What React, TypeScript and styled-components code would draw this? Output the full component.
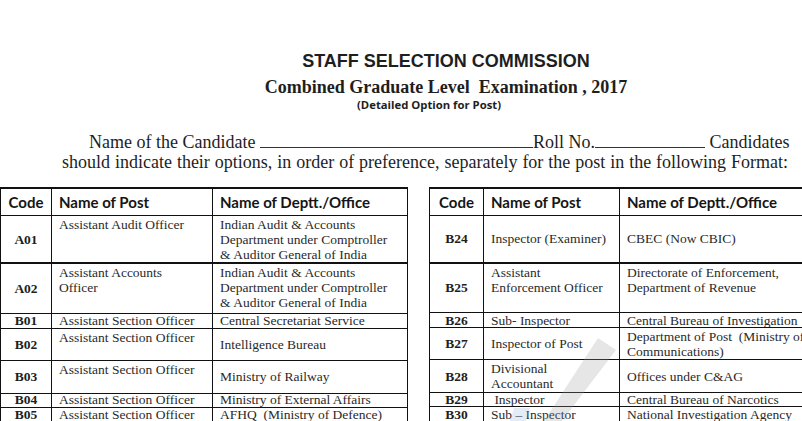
import styled, { createGlobalStyle } from 'styled-components'

type Align = 'top' | 'middle'

interface Row {
  code: string
  post: string[]
  dept: string[]
  height: number
  postAlign?: Align
  deptAlign?: Align
  thick?: boolean
}

const leftRows: Row[] = [
  { code: 'A01', post: ['Assistant Audit Officer'], dept: ['Indian Audit & Accounts', 'Department under Comptroller', '& Auditor General of India'], height: 47, postAlign: 'top', deptAlign: 'top', thick: true },
  { code: 'A02', post: ['Assistant Accounts', 'Officer'], dept: ['Indian Audit & Accounts', 'Department under Comptroller', '& Auditor General of India'], height: 50, postAlign: 'top', deptAlign: 'top' },
  { code: 'B01', post: ['Assistant Section Officer'], dept: ['Central Secretariat Service'], height: 15 },
  { code: 'B02', post: ['Assistant Section Officer'], dept: ['Intelligence Bureau'], height: 32, postAlign: 'top' },
  { code: 'B03', post: ['Assistant Section Officer'], dept: ['Ministry of Railway'], height: 33, postAlign: 'top' },
  { code: 'B04', post: ['Assistant Section Officer'], dept: ['Ministry of External Affairs'], height: 14 },
  { code: 'B05', post: ['Assistant Section Officer'], dept: ['AFHQ  (Ministry of Defence)'], height: 15 },
]

const rightRows: Row[] = [
  { code: 'B24', post: ['Inspector (Examiner)'], dept: ['CBEC (Now CBIC)'], height: 47, thick: true },
  { code: 'B25', post: ['Assistant', 'Enforcement Officer'], dept: ['Directorate of Enforcement,', 'Department of Revenue'], height: 50, postAlign: 'top', deptAlign: 'top' },
  { code: 'B26', post: ['Sub- Inspector'], dept: ['Central Bureau of Investigation'], height: 15 },
  { code: 'B27', post: ['Inspector of Post'], dept: ['Department of Post  (Ministry of', 'Communications)'], height: 32 },
  { code: 'B28', post: ['Divisional', 'Accountant'], dept: ['Offices under C&AG'], height: 33 },
  { code: 'B29', post: [' Inspector'], dept: ['Central Bureau of Narcotics'], height: 14 },
  { code: 'B30', post: ['Sub \u2013 Inspector'], dept: ['National Investigation Agency'], height: 15 },
]

const GlobalStyle = createGlobalStyle`
  html, body {
    margin: 0;
    padding: 0;
    background: #fff;
    overflow: hidden;
  }
`

const Page = styled.div`
  position: relative;
  width: 892px;
  height: 421px;
  overflow: hidden;
  color: #1e1e1e;
`

const Heading = styled.header`
  display: flex;
  flex-direction: column;
  align-items: center;
  padding-top: 51px;
`

const Title = styled.h1`
  margin: 0;
  font: bold 18px/20px "Liberation Sans", Arial, sans-serif;
`

const Subtitle = styled.h2`
  margin: 6px 0 0;
  font: bold 18px/20px "Liberation Serif", "Times New Roman", serif;
  white-space: pre;
`

const Note = styled.div`
  margin: 1px 34px 0 0;
  font: bold 11.3px/14px "Open Sans", sans-serif;
`

const Intro = styled.div`
  margin-top: 20px;
  font: 18px/20px "Liberation Serif", "Times New Roman", serif;
  white-space: pre;
`

const IntroLine = styled.div<{ $indent: number; $spread?: number }>`
  padding-left: ${p => p.$indent}px;
  word-spacing: ${p => p.$spread ?? 0}px;
`

const Blank = styled.span<{ $width: number }>`
  display: inline-block;
  width: ${p => p.$width}px;
  height: 0;
  border-bottom: 1px solid #333;
`

const Tables = styled.div`
  display: flex;
  align-items: flex-start;
  gap: 21px;
  margin-top: 15px;
`

const Table = styled.table<{ $width: number }>`
  width: ${p => p.$width}px;
  border-collapse: collapse;
  table-layout: fixed;
  border-top: 2px solid #111;
`

const HeadCell = styled.th<{ $center?: boolean }>`
  height: 26px;
  padding: 0 7px;
  border: 1px solid #111;
  text-align: ${p => (p.$center ? 'center' : 'left')};
  font: bold 15px/16px Lato, "Open Sans", sans-serif;
  color: #151515;
  white-space: nowrap;
`

const CodeCell = styled.td`
  padding: 0;
  border: 1px solid #111;
  text-align: center;
  vertical-align: middle;
  font: bold 13.5px/15px "Liberation Serif", "Times New Roman", serif;
`

const TextCell = styled.td<{ $align: Align }>`
  padding: ${p => (p.$align === 'top' ? '1px' : '0')} 7px 0;
  border: 1px solid #111;
  vertical-align: ${p => p.$align};
  font: 13.5px/15px "Liberation Serif", "Times New Roman", serif;
  color: #2a2a2a;
  white-space: pre;
  overflow: hidden;
`

const BodyRow = styled.tr<{ $height: number; $thick?: boolean }>`
  height: ${p => p.$height}px;
  border-bottom: ${p => (p.$thick ? '2px' : '1px')} solid #111;

  ${p => p.$height <= 15 && `
    td { line-height: ${p.$height - 2}px; }
  `}
`

const Watermark = styled.svg`
  position: absolute;
  left: 510px;
  top: 320px;
  pointer-events: none;
`

function OptionTable({ rows, widths }: { rows: Row[]; widths: number[] }) {
  const total = widths.reduce((a, b) => a + b, 0)
  return (
    <Table $width={total}>
      <colgroup>
        {widths.map((w, i) => <col key={i} style={{ width: w }} />)}
      </colgroup>
      <thead>
        <tr>
          <HeadCell $center>Code</HeadCell>
          <HeadCell>Name of Post</HeadCell>
          <HeadCell>Name of Deptt./Office</HeadCell>
        </tr>
      </thead>
      <tbody>
        {rows.map(r => (
          <BodyRow key={r.code} $height={r.height} $thick={r.thick}>
            <CodeCell>{r.code}</CodeCell>
            <TextCell $align={r.postAlign ?? 'middle'}>{r.post.join('\n')}</TextCell>
            <TextCell $align={r.deptAlign ?? 'middle'}>{r.dept.join('\n')}</TextCell>
          </BodyRow>
        ))}
      </tbody>
    </Table>
  )
}

export default function App() {
  return (
    <Page>
      <GlobalStyle />
      <Heading>
        <Title>STAFF SELECTION COMMISSION</Title>
        <Subtitle>{'Combined Graduate Level  Examination , 2017'}</Subtitle>
        <Note>(Detailed Option for Post)</Note>
      </Heading>
      <Intro>
        <IntroLine $indent={89}>
          Name of the Candidate <Blank $width={273} />Roll No.<Blank $width={110} /> Candidates
        </IntroLine>
        <IntroLine $indent={62} $spread={0.45}>
          should indicate their options, in order of preference, separately for the post in the following Format:
        </IntroLine>
      </Intro>
      <Tables>
        <OptionTable rows={leftRows} widths={[51, 161, 195]} />
        <OptionTable rows={rightRows} widths={[54, 136, 200]} />
      </Tables>
      <Watermark width="140" height="110" viewBox="0 0 140 110">
        <polygon points="88,18 106,30 52,101 34,101" fill="#9a9a9a" opacity="0.25" />
        <polygon points="4,88 20,88 16,101 0,101" fill="#8fb4e0" opacity="0.25" />
      </Watermark>
    </Page>
  )
}
